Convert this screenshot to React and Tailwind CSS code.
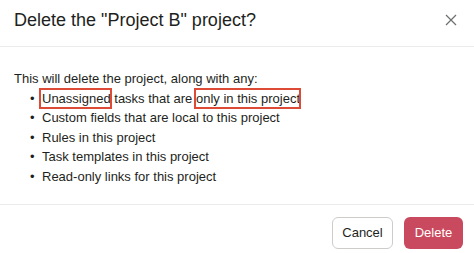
export default function App() {
  const items = [
    null,
    "Custom fields that are local to this project",
    "Rules in this project",
    "Task templates in this project",
    "Read-only links for this project",
  ];

  const Boxed = ({ children, left = "-3px", right = "-1px" }) => (
    <span className="relative">
      {children}
      <span
        className="absolute -top-[3px] -bottom-[3px] border-2 border-[#dd4a35]"
        style={{ left, right }}
      />
    </span>
  );

  return (
    <div
      className="w-[474px] h-[253px] bg-white text-[#1e1f21] overflow-hidden"
      style={{ fontFamily: '"Liberation Sans", Arial, sans-serif' }}
    >
      <div className="h-[47px] border-b border-[#ebebeb] flex items-start justify-between pl-[14px] pr-[17px] pt-[8px]">
        <h1 className="text-[18px] leading-[24px]">Delete the "Project B" project?</h1>
        <svg width="12" height="12" viewBox="0 0 12 12" className="mt-[6px]">
          <path d="M1 1 L11 11 M11 1 L1 11" stroke="#6d6e6f" strokeWidth="1.2" />
        </svg>
      </div>

      <div className="px-[14px] pt-[22px] pb-[18px] text-[13px] leading-[19.5px] h-[158px] border-b border-[#ebebeb]">
        <p>This will delete the project, along with any:</p>
        <ul className="pl-[16px]">
          {items.map((text, i) => (
            <li key={i} className="flex">
              <span className="w-[12px]">•</span>
              {text === null ? (
                <span>
                  <Boxed>Unassigned</Boxed> tasks that are{" "}
                  <Boxed left="-2px" right="-1px">only in this project</Boxed>
                </span>
              ) : (
                <span>{text}</span>
              )}
            </li>
          ))}
        </ul>
      </div>

      <div className="flex justify-end gap-[11px] pr-[11px] pt-[12px]">
        <button className="h-[32px] w-[61px] rounded-[6px] border border-[#cfcbcb] bg-white text-[13px] text-[#1e1f21]">
          Cancel
        </button>
        <button className="h-[32px] w-[59px] rounded-[6px] bg-[#c94a5e] text-[13px] text-white">
          Delete
        </button>
      </div>
    </div>
  );
}
